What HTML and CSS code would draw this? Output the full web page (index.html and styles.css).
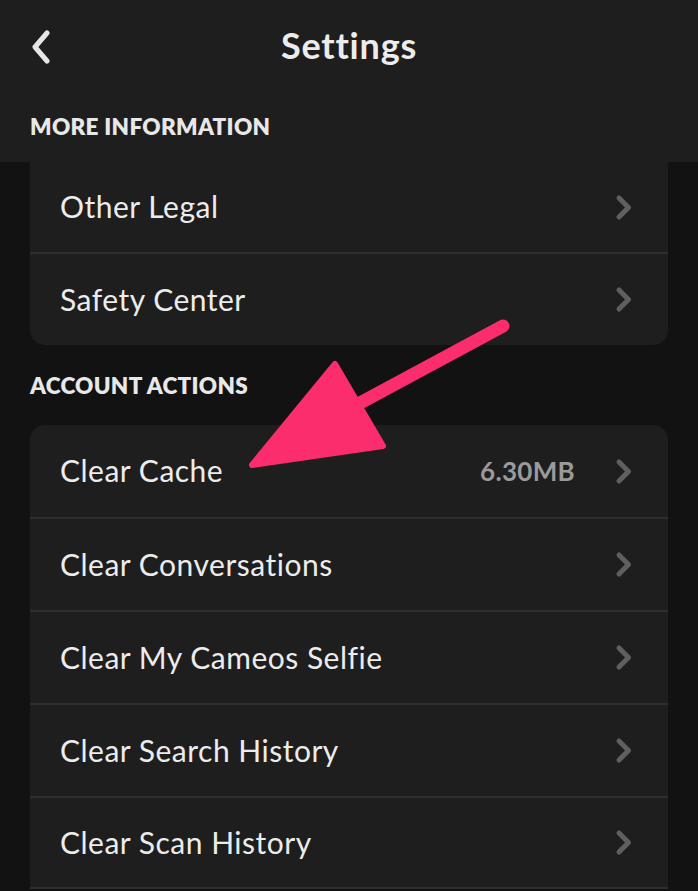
FILE: index.html
```html
<!DOCTYPE html>
<html lang="en">
<head>
<meta charset="utf-8">
<title>Settings</title>
<link rel="stylesheet" href="styles.css">
</head>
<body>
<div class="screen">
  <header class="topbar">
    <div class="nav">
      <svg class="back" width="22" height="34" viewBox="0 0 22 34"><path d="M17 3 L5 17 L17 31" fill="none" stroke="#e6e6e6" stroke-width="5" stroke-linecap="round" stroke-linejoin="round"/></svg>
      <h1 class="title">Settings</h1>
    </div>
    <div class="section-label">MORE INFORMATION</div>
  </header>

  <main class="content">
    <div class="card card-cut">
      <div class="row row-first"><span class="label">Other Legal</span><svg class="chev" width="18" height="27" viewBox="0 0 18 27"><path d="M4 4 L13.5 13.5 L4 23" fill="none" stroke="#5f5f5f" stroke-width="5" stroke-linecap="round" stroke-linejoin="round"/></svg></div>
      <div class="row"><span class="label">Safety Center</span><svg class="chev" width="18" height="27" viewBox="0 0 18 27"><path d="M4 4 L13.5 13.5 L4 23" fill="none" stroke="#5f5f5f" stroke-width="5" stroke-linecap="round" stroke-linejoin="round"/></svg></div>
    </div>

    <div class="section-label section-gap">ACCOUNT ACTIONS</div>

    <div class="card card-open">
      <div class="row"><span class="label">Clear Cache</span><span class="value">6.30MB</span><svg class="chev" width="18" height="27" viewBox="0 0 18 27"><path d="M4 4 L13.5 13.5 L4 23" fill="none" stroke="#5f5f5f" stroke-width="5" stroke-linecap="round" stroke-linejoin="round"/></svg></div>
      <div class="row"><span class="label">Clear Conversations</span><svg class="chev" width="18" height="27" viewBox="0 0 18 27"><path d="M4 4 L13.5 13.5 L4 23" fill="none" stroke="#5f5f5f" stroke-width="5" stroke-linecap="round" stroke-linejoin="round"/></svg></div>
      <div class="row"><span class="label">Clear My Cameos Selfie</span><svg class="chev" width="18" height="27" viewBox="0 0 18 27"><path d="M4 4 L13.5 13.5 L4 23" fill="none" stroke="#5f5f5f" stroke-width="5" stroke-linecap="round" stroke-linejoin="round"/></svg></div>
      <div class="row"><span class="label">Clear Search History</span><svg class="chev" width="18" height="27" viewBox="0 0 18 27"><path d="M4 4 L13.5 13.5 L4 23" fill="none" stroke="#5f5f5f" stroke-width="5" stroke-linecap="round" stroke-linejoin="round"/></svg></div>
      <div class="row row-last"><span class="label">Clear Scan History</span><svg class="chev" width="18" height="27" viewBox="0 0 18 27"><path d="M4 4 L13.5 13.5 L4 23" fill="none" stroke="#5f5f5f" stroke-width="5" stroke-linecap="round" stroke-linejoin="round"/></svg></div>
    </div>
  </main>

  <svg class="arrow" width="698" height="891" viewBox="0 0 698 891">
    <line x1="503" y1="326" x2="360" y2="403" stroke="#fc2d6c" stroke-width="13" stroke-linecap="round"/>
    <path d="M335 364 L383 446 L252 465 Z" fill="#fc2d6c" stroke="#fc2d6c" stroke-width="6" stroke-linejoin="round"/>
  </svg>
</div>
</body>
</html>
```

FILE: styles.css
```css
* { box-sizing: border-box; }
html, body {
  margin: 0;
  padding: 0;
  background: #121212;
  width: 698px;
  height: 891px;
  overflow: hidden;
}
body {
  font-family: Lato, "Noto Sans", sans-serif;
  color: #ececec;
}
.screen {
  position: relative;
  width: 698px;
  height: 891px;
  overflow: hidden;
}
.topbar {
  background: #1e1e1e;
  height: 162px;
  padding: 0 30px;
  display: flex;
  flex-direction: column;
}
.nav {
  height: 92px;
  display: flex;
  align-items: center;
  justify-content: center;
  position: relative;
}
.back {
  position: absolute;
  left: 0;
  top: 30px;
}
.title {
  margin: 0;
  margin-top: -2px;
  font-size: 36px;
  font-weight: 700;
  color: #ececec;
  letter-spacing: 0.8px;
}
.section-label {
  font-size: 22.5px;
  font-weight: 800;
  color: #e8e8e8;
  letter-spacing: 0.3px;
  line-height: 26px;
  padding-top: 22px;
}
.content {
  padding: 0 30px;
}
.section-gap {
  padding-top: 28px;
  height: 80px;
}
.card {
  background: #1e1e1e;
  border-radius: 15px;
  overflow: hidden;
}
.card-cut {
  border-radius: 0 0 15px 15px;
}
.card-open {
  border-radius: 15px 15px 0 0;
}
.row {
  height: 93px;
  display: flex;
  align-items: center;
  padding: 0 30px;
  border-top: 2px solid #2e2e2e;
}
.row:first-child { border-top: none; height: 92px; }
.row-first { height: 90px !important; }
.row-last { border-bottom: 2px solid #2e2e2e; }
.label {
  flex: 1;
  font-size: 30px;
  font-weight: 400;
  color: #ececec;
  letter-spacing: 0.5px;
  margin-top: -2px;
}
.value {
  font-size: 26px;
  font-weight: 700;
  color: #9a9a9a;
  margin-right: 40px;
  letter-spacing: 0.3px;
}
.chev {
  margin-right: 5px;
  flex: none;
}
.arrow {
  position: absolute;
  left: 0;
  top: 0;
  pointer-events: none;
}
```
